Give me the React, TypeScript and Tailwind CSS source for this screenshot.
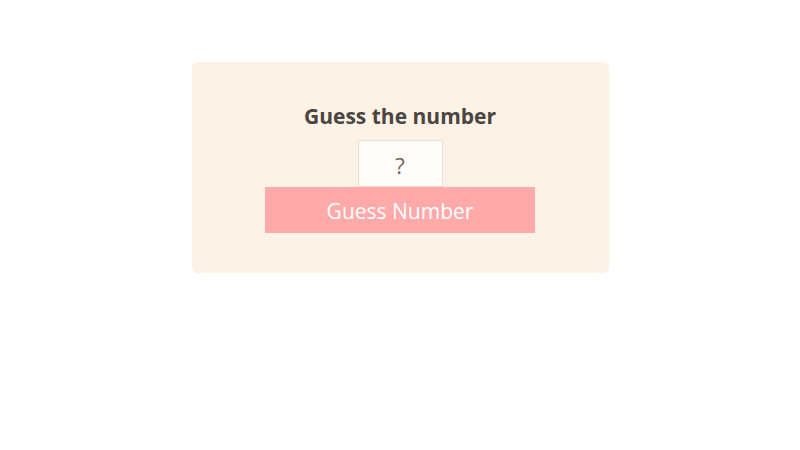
import { useState } from "react";

export default function App() {
  const [guess, setGuess] = useState("");

  return (
    <div className="min-h-screen bg-white pt-[62px] font-['Open_Sans',sans-serif]">
      <div className="mx-auto flex h-[211px] w-[417px] flex-col items-center rounded-md bg-[#fdf2e6] pt-[38px]">
        <h1 className="text-[21px] leading-[32px] font-bold text-[#4a4540]">Guess the number</h1>
        <input
          value={guess}
          onChange={(e) => setGuess(e.target.value)}
          placeholder="?"
          className="mt-[8px] h-[47px] w-[85px] border border-[#ecdfd2] bg-[#fffcf9] pt-[2px] text-center text-[22px] text-[#6b6560] outline-none placeholder:text-[#6b6560]"
        />
        <button className="h-[46px] w-[270px] bg-[#ffa9a9] pt-[3px] text-[21px] font-normal text-white">
          Guess Number
        </button>
      </div>
    </div>
  );
}
